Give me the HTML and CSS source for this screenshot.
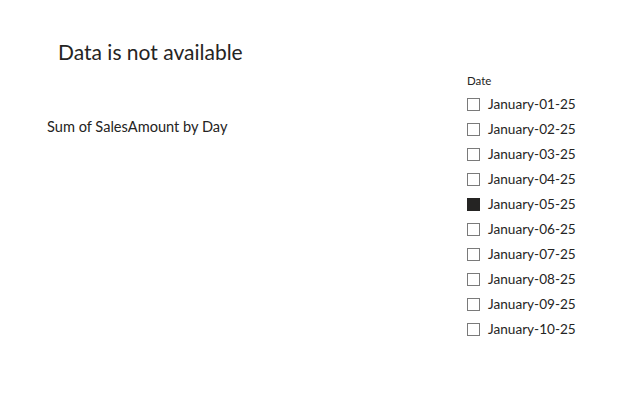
FILE: index.html
```html
<!DOCTYPE html>
<html>
<head>
<meta charset="utf-8">
<link rel="stylesheet" href="styles.css">
</head>
<body>
<div class="page">
  <div class="left">
    <div class="title">Data is not available</div>
    <div class="subtitle">Sum of SalesAmount by Day</div>
  </div>
  <div class="slicer">
    <div class="slicer-head">Date</div>
    <ul class="items">
      <li><span class="box"></span>January-01-25</li>
      <li><span class="box"></span>January-02-25</li>
      <li><span class="box"></span>January-03-25</li>
      <li><span class="box"></span>January-04-25</li>
      <li><span class="box checked"></span>January-05-25</li>
      <li><span class="box"></span>January-06-25</li>
      <li><span class="box"></span>January-07-25</li>
      <li><span class="box"></span>January-08-25</li>
      <li><span class="box"></span>January-09-25</li>
      <li><span class="box"></span>January-10-25</li>
    </ul>
  </div>
</div>
</body>
</html>
```
FILE: styles.css
```css
html, body {
  margin: 0;
  padding: 0;
  background: #ffffff;
}
body {
  width: 625px;
  height: 404px;
  overflow: hidden;
  font-family: "Lato", "Open Sans", sans-serif;
  color: #252423;
}
.page {
  display: flex;
}
.left {
  width: 467px;
  display: flex;
  flex-direction: column;
}
.title {
  margin: 39px 0 0 58px;
  font-size: 21px;
  line-height: 26px;
  color: #252423;
}
.subtitle {
  margin: 53px 0 0 47px;
  font-size: 14.6px;
  line-height: 18px;
  color: #252423;
}
.slicer {
  padding-top: 73px;
}
.slicer-head {
  font-size: 11.5px;
  line-height: 16px;
  color: #252423;
  margin-bottom: 6px;
}
.items {
  list-style: none;
  margin: 0;
  padding: 0;
  display: flex;
  flex-direction: column;
  gap: 7px;
}
.items li {
  display: flex;
  align-items: center;
  height: 18px;
  font-size: 13.6px;
  color: #252423;
}
.box {
  width: 11px;
  height: 11px;
  border: 1px solid #7a7a7a;
  margin-right: 8px;
  box-sizing: content-box;
}
.box.checked {
  background: #252423;
  border-color: #252423;
}
```
